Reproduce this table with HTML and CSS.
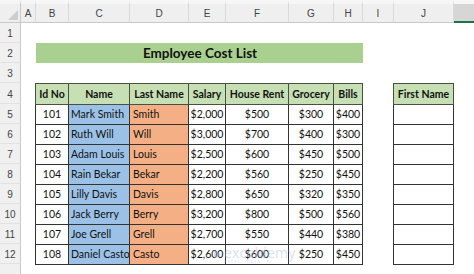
FILE: index.html
```html
<!DOCTYPE html>
<html>
<head>
<meta charset="utf-8">
<link rel="stylesheet" href="styles.css">
</head>
<body>
<div class="sheet">
  <div class="ch corner"><span class="tri"></span></div>
  <div class="ch">A</div>
  <div class="ch">B</div>
  <div class="ch">C</div>
  <div class="ch">D</div>
  <div class="ch">E</div>
  <div class="ch">F</div>
  <div class="ch">G</div>
  <div class="ch">H</div>
  <div class="ch">I</div>
  <div class="ch">J</div>
  <div class="ch sel"></div>

  <div class="rn">1</div>
  <div class="rn">2</div>
  <div class="rn">3</div>
  <div class="rn">4</div>
  <div class="rn">5</div>
  <div class="rn">6</div>
  <div class="rn">7</div>
  <div class="rn">8</div>
  <div class="rn">9</div>
  <div class="rn">10</div>
  <div class="rn">11</div>
  <div class="rn">12</div>
  <div class="rn"></div>

  <div class="title">Employee Cost List</div>

  <table class="data">
    <colgroup>
      <col class="w-b"><col class="w-c"><col class="w-d"><col class="w-e"><col class="w-f"><col class="w-g"><col class="w-h">
    </colgroup>
    <tr class="head">
      <th>Id No</th><th>Name</th><th>Last Name</th><th>Salary</th><th>House Rent</th><th>Grocery</th><th>Bills</th>
    </tr>
    <tr><td class="c">101</td><td class="nm">Mark Smith</td><td class="ln">Smith</td><td class="c">$2,000</td><td class="c">$500</td><td class="c">$300</td><td class="c">$400</td></tr>
    <tr><td class="c">102</td><td class="nm">Ruth Will</td><td class="ln">Will</td><td class="c">$3,000</td><td class="c">$700</td><td class="c">$400</td><td class="c">$300</td></tr>
    <tr><td class="c">103</td><td class="nm">Adam Louis</td><td class="ln">Louis</td><td class="c">$2,500</td><td class="c">$600</td><td class="c">$450</td><td class="c">$500</td></tr>
    <tr><td class="c">104</td><td class="nm">Rain Bekar</td><td class="ln">Bekar</td><td class="c">$2,200</td><td class="c">$560</td><td class="c">$250</td><td class="c">$450</td></tr>
    <tr><td class="c">105</td><td class="nm">Lilly Davis</td><td class="ln">Davis</td><td class="c">$2,800</td><td class="c">$650</td><td class="c">$320</td><td class="c">$350</td></tr>
    <tr><td class="c">106</td><td class="nm">Jack Berry</td><td class="ln">Berry</td><td class="c">$3,200</td><td class="c">$800</td><td class="c">$500</td><td class="c">$560</td></tr>
    <tr><td class="c">107</td><td class="nm">Joe Grell</td><td class="ln">Grell</td><td class="c">$2,700</td><td class="c">$550</td><td class="c">$440</td><td class="c">$380</td></tr>
    <tr><td class="c">108</td><td class="nm">Daniel Casto</td><td class="ln">Casto</td><td class="c">$2,600</td><td class="c">$600</td><td class="c">$250</td><td class="c">$450</td></tr>
  </table>

  <table class="first">
    <tr class="head"><th>First Name</th></tr>
    <tr><td></td></tr>
    <tr><td></td></tr>
    <tr><td></td></tr>
    <tr><td></td></tr>
    <tr><td></td></tr>
    <tr><td></td></tr>
    <tr><td></td></tr>
    <tr><td></td></tr>
  </table>

  <div class="mark">
    <svg class="mark-icon" width="9" height="11" viewBox="0 0 9 11"><path d="M1 1 L8 5.5 L1 10 Z" fill="#9fb6d8"/></svg>
    <div class="mark-text">
      <span class="mark-name">exceldemy</span>
      <span class="mark-sub">EXCEL · DATA · BI</span>
    </div>
  </div>
</div>
</body>
</html>
```

FILE: styles.css
```css
html, body {
  margin: 0;
  padding: 0;
  background: #ffffff;
}

body {
  font-family: "Lato", "Liberation Sans", sans-serif;
  font-size: 10.5px;
  color: #111;
  overflow: hidden;
}

.sheet {
  position: relative;
  display: grid;
  grid-template-columns: 21px 15px 33px 61px 59px 37px 63px 45px 29px 31px 60px 20px;
  grid-template-rows: 23px 20px 20px 20px 21px repeat(9, 20px);
  width: 474px;
  height: 274px;
  overflow: hidden;
}

.ch {
  background: #efefef;
  border-top: 4px solid #f6f6f6;
  border-bottom: 1px solid #c9c9c9;
  border-right: 1px solid #dadada;
  box-sizing: border-box;
  display: flex;
  align-items: center;
  justify-content: center;
  color: #444;
  font-family: "Liberation Sans", sans-serif;
  font-size: 10px;
  padding-top: 1px;
}

.ch.corner {
  position: relative;
  border-right: 1px solid #c9c9c9;
}

.ch.corner .tri {
  position: absolute;
  right: 2px;
  bottom: 2px;
  width: 0;
  height: 0;
  border-left: 10px solid transparent;
  border-bottom: 10px solid #cdcdcd;
}

.ch.sel {
  background: #d6d6d6;
  border-bottom: 2px solid #217346;
  border-right: none;
}

.rn {
  grid-column: 1;
  background: #f0f0f0;
  border-right: 1px solid #c9c9c9;
  border-bottom: 1px solid #e2e2e2;
  box-sizing: border-box;
  display: flex;
  align-items: center;
  justify-content: center;
  color: #444;
  font-family: "Liberation Sans", sans-serif;
  font-size: 10px;
  padding-top: 2px;
}

.title {
  grid-column: 3 / 10;
  grid-row: 3;
  background: #a9d08e;
  display: flex;
  align-items: center;
  justify-content: center;
  font-weight: 700;
  font-size: 13.5px;
  color: #111;
  padding-left: 1px;
}

table {
  border-collapse: collapse;
  table-layout: fixed;
  align-self: start;
}

.data {
  grid-column: 3 / 10;
  grid-row: 5 / 14;
  width: 328px;
  margin-left: -1px;
}

.first {
  grid-column: 11 / 12;
  grid-row: 5 / 14;
  width: 61px;
  margin-left: -1px;
}

.w-b { width: 33px; }
.w-c { width: 61px; }
.w-d { width: 59px; }
.w-e { width: 37px; }
.w-f { width: 63px; }
.w-g { width: 45px; }
.w-h { width: 29px; }

th, td {
  border: 1px solid #333;
  padding: 0;
  height: 19px;
  white-space: nowrap;
  overflow: hidden;
  line-height: 19px;
}

tr.head th {
  background: #c6e0b4;
  font-weight: 700;
  height: 20px;
  text-align: center;
  color: #111;
  border-color: #4a4f45;
}

td.c {
  text-align: center;
}

td.nm {
  background: #9bc2e6;
  padding-left: 2px;
  text-align: left;
}

td.ln {
  background: #f4b084;
  padding-left: 3px;
  text-align: left;
}

.mark {
  position: absolute;
  left: 213px;
  top: 246px;
  display: flex;
  align-items: flex-start;
  gap: 2px;
  opacity: 0.45;
  pointer-events: none;
}

.mark-icon {
  margin-top: 3px;
}

.mark-text {
  display: flex;
  flex-direction: column;
  line-height: 1;
}

.mark-name {
  font-family: "Open Sans", sans-serif;
  font-size: 14px;
  color: #a6bde0;
  letter-spacing: 0.2px;
}

.mark-sub {
  font-size: 4px;
  color: #a6bde0;
  letter-spacing: 1px;
}
```
